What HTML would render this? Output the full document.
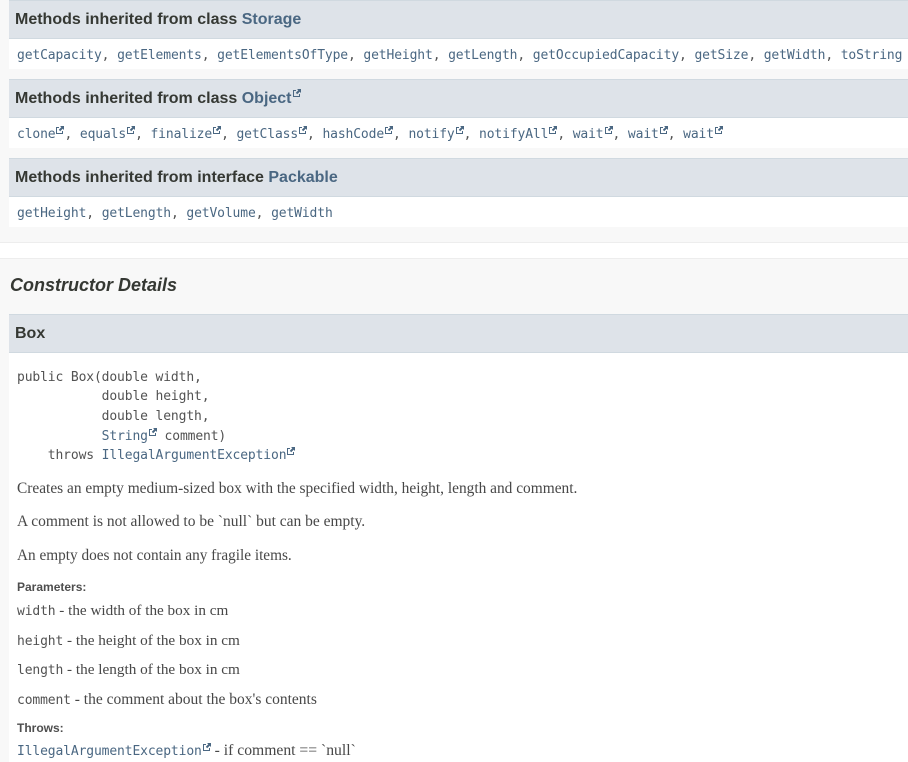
<!DOCTYPE html>
<html>
<head>
<meta charset="utf-8">
<style>
html,body{margin:0;padding:0}
body{width:908px;height:762px;overflow:hidden;background:#f8f8f8;position:relative;color:#353833}
.abs,.t,.m,.s,.h{position:absolute;white-space:pre}
.bar{position:absolute;left:9px;width:899px;background:#dee3e9;border-top:1px solid #d0d9e0;border-bottom:1px solid #d0d9e0;box-sizing:border-box;height:39px}
.wh{position:absolute;left:9px;width:899px;background:#fff}
.h{left:15px;font:bold 16px/20px "Liberation Sans",sans-serif;color:#353833}
.h a{color:#4a6782}
.m{font:13px/20px "DejaVu Sans Mono",monospace;letter-spacing:-0.13px;color:#525252}
.m a{color:#4a6782}
.s{font:15.4px/20px "Liberation Serif",serif;color:#474747}
.s .m{font-size:13px}
.l{position:absolute;left:17px;font:bold 12px/16px "Liberation Sans",sans-serif;color:#4e4e4e}
svg.e{display:inline-block;width:8px;height:8px;vertical-align:4px;margin-left:1px}
</style>
</head>
<body>
<svg width="0" height="0" style="position:absolute"><defs><symbol id="x" viewBox="0 0 8 8"><path d="M3 1.500H.5v6h6V5" fill="none" stroke="#4a6782" stroke-width="1"/><path d="M4 0h4v4L6.700 2.700 4.200 5.200 2.800 3.800 5.300 1.300z" fill="#4a6782"/></symbol></defs></svg>

<div class="bar" style="top:0"></div>
<div class="wh" style="top:39px;height:30px"></div>
<div class="bar" style="top:79px"></div>
<div class="wh" style="top:118px;height:30px"></div>
<div class="bar" style="top:158px"></div>
<div class="wh" style="top:197px;height:30px"></div>

<div class="abs" style="left:0;top:242px;width:908px;height:17px;background:#fff;border-top:1px solid #ededed;border-bottom:1px solid #ededed;box-sizing:border-box"></div>

<div class="bar" style="top:314px"></div>
<div class="wh" style="top:353px;height:409px"></div>

<div class="h" style="top:10px">Methods inherited from class <a>Storage</a></div>
<div class="m" style="left:17px;top:46px"><a>getCapacity</a>, <a>getElements</a>, <a>getElementsOfType</a>, <a>getHeight</a>, <a>getLength</a>, <a>getOccupiedCapacity</a>, <a>getSize</a>, <a>getWidth</a>, <a>toString</a></div>

<div class="h" style="top:89px">Methods inherited from class <a>Object</a><svg class="e" style="vertical-align:6px"><use href="#x"/></svg></div>
<div class="m" style="left:17px;top:125px"><a>clone</a><svg class="e"><use href="#x"/></svg>, <a>equals</a><svg class="e"><use href="#x"/></svg>, <a>finalize</a><svg class="e"><use href="#x"/></svg>, <a>getClass</a><svg class="e"><use href="#x"/></svg>, <a>hashCode</a><svg class="e"><use href="#x"/></svg>, <a>notify</a><svg class="e"><use href="#x"/></svg>, <a>notifyAll</a><svg class="e"><use href="#x"/></svg>, <a>wait</a><svg class="e"><use href="#x"/></svg>, <a>wait</a><svg class="e"><use href="#x"/></svg>, <a>wait</a><svg class="e"><use href="#x"/></svg></div>

<div class="h" style="top:168px">Methods inherited from interface <a>Packable</a></div>
<div class="m" style="left:17px;top:204px"><a>getHeight</a>, <a>getLength</a>, <a>getVolume</a>, <a>getWidth</a></div>

<div class="abs" style="left:10px;top:275px;font:italic bold 18px/21px 'Liberation Sans',sans-serif;color:#353833">Constructor Details</div>
<div class="h" style="top:324px">Box</div>

<div class="m" style="left:17px;top:368px">public Box(double width,</div>
<div class="m" style="left:17px;top:387px">           double height,</div>
<div class="m" style="left:17px;top:407px">           double length,</div>
<div class="m" style="left:17px;top:427px">           <a>String</a><svg class="e"><use href="#x"/></svg> comment)</div>
<div class="m" style="left:17px;top:446px">    throws <a>IllegalArgumentException</a><svg class="e"><use href="#x"/></svg></div>

<div class="s" style="left:17px;top:479px">Creates an empty medium-sized box with the specified width, height, length and comment.</div>
<div class="s" style="left:17px;top:512px;font-size:15.49px">A comment is not allowed to be `null` but can be empty.</div>
<div class="s" style="left:17px;top:546px;font-size:15.28px">An empty does not contain any fragile items.</div>

<div class="l" style="top:579px">Parameters:</div>
<div class="s" style="left:17px;top:601px;font-size:15.18px"><span class="m" style="position:static">width</span> - the width of the box in cm</div>
<div class="s" style="left:17px;top:631px;font-size:15.22px"><span class="m" style="position:static">height</span> - the height of the box in cm</div>
<div class="s" style="left:17px;top:660px;font-size:15.22px"><span class="m" style="position:static">length</span> - the length of the box in cm</div>
<div class="s" style="left:17px;top:690px;font-size:15.5px"><span class="m" style="position:static">comment</span> - the comment about the box's contents</div>
<div class="l" style="top:720px">Throws:</div>
<div class="s" style="left:17px;top:741px;font-size:15.67px"><span class="m" style="position:static"><a>IllegalArgumentException</a><svg class="e"><use href="#x"/></svg></span> - if comment == `null`</div>
</body>
</html>
